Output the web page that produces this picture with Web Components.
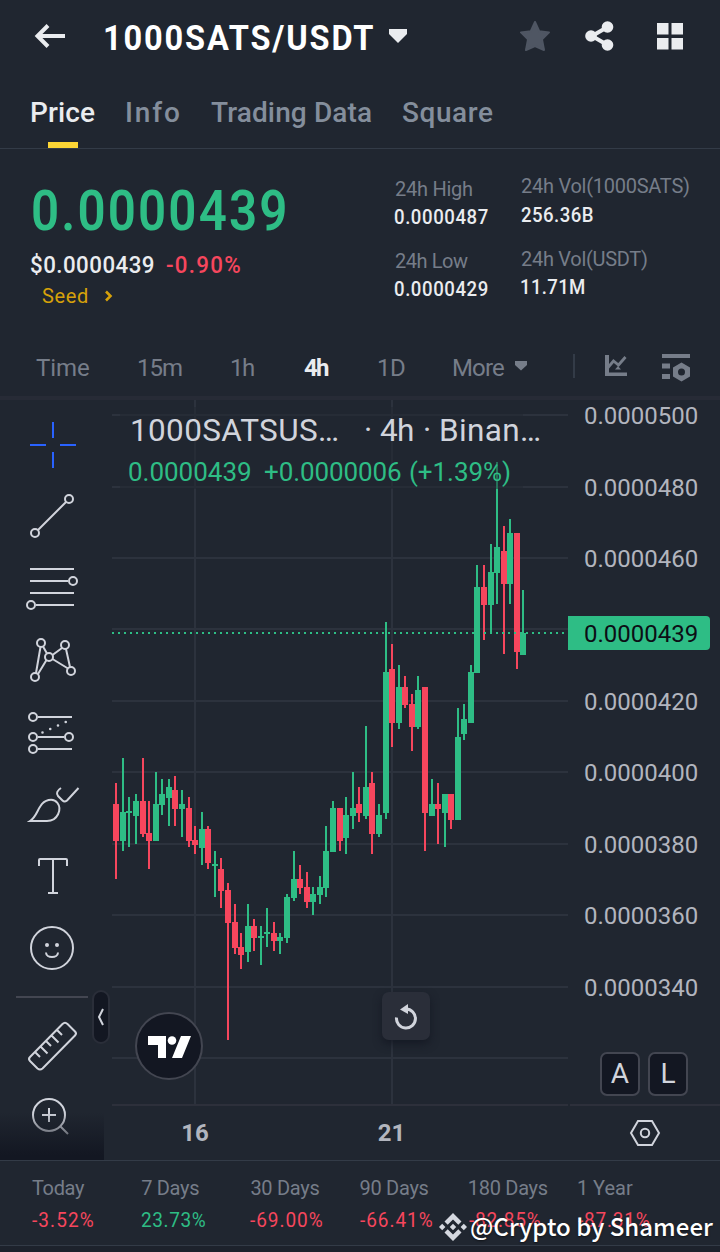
<!DOCTYPE html>
<html lang="en">
<head>
<meta charset="utf-8">
<title>1000SATS/USDT</title>
<style>
  body {
    margin: 0;
    background: #202630;
    color: #eaecef;
    font-family: Roboto, "Liberation Sans", sans-serif;
    --muted: #848e9c;
    --dim: #767d89;
    --up: #2ebd85;
    --down: #f6465d;
    --line: #333b47;
  }
</style>
</head>
<body>
<market-app></market-app>

<script>
/*
  A single line of text whose box is exactly its visible ink.
  The w attribute is the wanted width, the tracking is adjusted to fill it.
  --squeeze narrows the glyphs themselves.
*/
class FitText extends HTMLElement {
  constructor() {
    super();
    this.attachShadow({ mode: 'open' });
    this.shadowRoot.innerHTML = `
      <style>
        :host { display: block; flex: none; white-space: nowrap; }
        span { display: block; transform-origin: 0 50%; }
      </style>
      <span><slot></slot></span>
    `;
  }

  connectedCallback() {
    const text = this.textContent;
    const w = Number(this.getAttribute('w'));
    const cs = getComputedStyle(this);
    const squeeze = Number(cs.getPropertyValue('--squeeze')) || 1;
    const ctx = document.createElement('canvas').getContext('2d');
    ctx.font = `${cs.fontWeight} ${cs.fontSize} ${cs.fontFamily}`;
    const m = ctx.measureText(text);
    const ink = m.actualBoundingBoxRight + m.actualBoundingBoxLeft;
    const span = this.shadowRoot.querySelector('span');
    this.style.width = w + 'px';
    span.style.marginLeft = m.actualBoundingBoxLeft * squeeze + 'px';
    span.style.marginRight = '-20px';
    if (squeeze !== 1) {
      span.style.transform = `scaleX(${squeeze})`;
    }
    if (text.length > 1) {
      span.style.letterSpacing = (w / squeeze - ink) / (text.length - 1) + 'px';
    }
  }
}
customElements.define('fit-text', FitText);

class MarketHeader extends HTMLElement {
  constructor() {
    super();
    this.attachShadow({ mode: 'open' });
    this.shadowRoot.innerHTML = `
      <style>
        :host { display: flex; align-items: center; height: 72px; padding: 0 36px 0 34px; fill: #eaecef; }
        svg { flex: none; display: block; }
        .back { margin-right: 39px; }
        fit-text { font-size: 35px; line-height: 40px; font-weight: 700; color: #fff; margin-top: 6px; --squeeze: .93; }
        .caret { margin-left: 16px; }
        .actions { margin-left: auto; display: flex; align-items: center; }
        .share { margin: 0 41px 0 35px; }
      </style>
      <svg class="back" width="32" height="26" viewBox="0 0 32 26">
        <path d="M14 2.5 3.5 13 14 23.5M4 13h27" fill="none" stroke="#eaecef" stroke-width="4"/>
      </svg>
      <fit-text w="268">1000SATS/USDT</fit-text>
      <svg class="caret" width="18" height="14" viewBox="0 0 18 14"><path d="M0 0h18v5L9 14 0 5z"/></svg>
      <div class="actions">
        <svg width="30" height="30" viewBox="0 0 30 30">
          <path d="M15 1l4.2 9.2L29 11.4l-7 7 2 10.6-9-4-9 4 2-10.6-7-7 9.8-1.2z" fill="#4f5663" stroke="#4f5663" stroke-width="2" stroke-linejoin="round"/>
        </svg>
        <svg class="share" width="30" height="30" viewBox="0 0 30 30">
          <path d="M22.500 6 7 15l15.500 9" fill="none" stroke="#eaecef" stroke-width="4"/>
          <circle cx="6" cy="15" r="5.800"/><circle cx="22.500" cy="6" r="5.800"/><circle cx="22.500" cy="24" r="5.800"/>
        </svg>
        <svg width="28" height="28" viewBox="0 0 28 28"><path d="M1 1h11.500v11.500H1zM15.500 1H27v11.500H15.500zM1 16h11.500v11.500H1zM15.500 16H27v11.500H15.500z"/></svg>
      </div>
    `;
  }
}
customElements.define('market-header', MarketHeader);

class MarketTabs extends HTMLElement {
  constructor() {
    super();
    this.attachShadow({ mode: 'open' });
    this.shadowRoot.innerHTML = `
      <style>
        :host {
          display: flex; gap: 32px; box-sizing: border-box; height: 77px; padding: 25px 32px 0;
          border-bottom: 1px solid var(--line);
          font-size: 28px; line-height: 32px; font-weight: 500; color: var(--muted);
        }
        .active { position: relative; color: #eaecef; }
        .active::after { content: ""; position: absolute; left: 16px; top: 45px; width: 30px; height: 6px; background: #fcd535; }
      </style>
      <fit-text class="active" w="63">Price</fit-text>
      <fit-text w="52">Info</fit-text>
      <fit-text w="160">Trading Data</fit-text>
      <fit-text w="90">Square</fit-text>
    `;
  }
}
customElements.define('market-tabs', MarketTabs);

class MarketTicker extends HTMLElement {
  constructor() {
    super();
    this.attachShadow({ mode: 'open' });
    this.shadowRoot.innerHTML = `
      <style>
        :host { display: flex; box-sizing: border-box; height: 188px; }
        .main { width: 364px; padding: 32px 0 0 31px; box-sizing: content-box; }
        .price { font-size: 56px; line-height: 60px; font-weight: 600; color: var(--up); margin-left: 2px; --squeeze: .88; }
        .row { display: flex; gap: 12px; margin-top: 10px; font-size: 24px; line-height: 28px; font-weight: 500; --squeeze: .93; }
        .down { color: var(--down); }
        .seed { display: flex; align-items: center; gap: 17px; margin: 5px 0 0 11px; font-size: 20px; line-height: 24px; color: #d6a10a; }
        .stats { width: 126px; padding-top: 28px; font-size: 20px; line-height: 24px; }
        .stats.vol { padding-top: 25px; }
        .label { color: var(--dim); }
        .value { margin: 4px 0 20px; font-weight: 500; --squeeze: .93; }
        .vol .value { margin: 5px 0 20px; }
        .vol .value:last-child { margin-top: 4px; }
      </style>
      <div class="main">
        <fit-text class="price" w="252">0.0000439</fit-text>
        <div class="row">
          <fit-text w="123">$0.0000439</fit-text>
          <fit-text class="down" w="74">-0.90%</fit-text>
        </div>
        <div class="seed">
          <fit-text w="45">Seed</fit-text>
          <svg width="10" height="12" viewBox="0 0 10 12"><path d="M2 1.500 6.500 6 2 10.500" fill="none" stroke="#d6a10a" stroke-width="2.600"/></svg>
        </div>
      </div>
      <div class="stats">
        <fit-text class="label" w="77">24h High</fit-text>
        <fit-text class="value" w="93">0.0000487</fit-text>
        <fit-text class="label" w="73">24h Low</fit-text>
        <fit-text class="value" w="93">0.0000429</fit-text>
      </div>
      <div class="stats vol">
        <fit-text class="label" w="168">24h Vol(1000SATS)</fit-text>
        <fit-text class="value" w="72">256.36B</fit-text>
        <fit-text class="label" w="126">24h Vol(USDT)</fit-text>
        <fit-text class="value" w="64">11.71M</fit-text>
      </div>
    `;
  }
}
customElements.define('market-ticker', MarketTicker);

class IntervalBar extends HTMLElement {
  constructor() {
    super();
    this.attachShadow({ mode: 'open' });
    this.shadowRoot.innerHTML = `
      <style>
        :host {
          display: flex; box-sizing: border-box; height: 59px; padding: 17px 0 0 36px;
          font-size: 24px; line-height: 28px; color: var(--dim); fill: #767d89;
        }
        .items { display: flex; gap: 50px; }
        .active { color: #eaecef; font-weight: 700; }
        .more { display: flex; gap: 11px; margin-left: -2px; }
        .more svg { margin-top: 7px; }
        hr { width: 2px; height: 24px; margin: 0 30px 0 46px; border: 0; background: #333b47; }
        .layout { margin-left: 34px; }
      </style>
      <div class="items">
        <fit-text w="53">Time</fit-text>
        <fit-text w="43">15m</fit-text>
        <fit-text w="22">1h</fit-text>
        <fit-text class="active" w="25">4h</fit-text>
        <fit-text w="26">1D</fit-text>
        <div class="more">
          <fit-text w="51">More</fit-text>
          <svg width="12" height="10" viewBox="0 0 12 10"><path d="M0 0h12v4L6 9.500 0 4z"/></svg>
        </div>
      </div>
      <hr>
      <svg width="23" height="24" viewBox="0 0 23 24">
        <path d="M0 1h4v17.500h18V22H0z"/>
        <path d="M3 13.500 8.500 7l5 4L20.500 3" fill="none" stroke="#767d89" stroke-width="2.800"/>
        <path d="M10 15.500 13 12l3 3.500z"/>
      </svg>
      <svg class="layout" width="30" height="30" viewBox="0 0 30 30">
        <path d="M0-1h28v5H0zM0 9.500h8v5H0zM0 20h8v5H0z"/>
        <path fill-rule="evenodd" d="M19.500 8.500 28 13.500v9L19.500 27.500 11 22.500v-9zM19.500 14.500a3.500 3.500 0 1 0 0 7 3.500 3.500 0 0 0 0-7z"/>
      </svg>
    `;
  }
}
customElements.define('interval-bar', IntervalBar);

// every tool is drawn in a 72 x 72 tile
const TOOLS = {
  cross: '<path stroke="#2962ff" d="M37 13v16M37 43v16M14 36h16M44 36h16"/>',
  trend: '<circle cx="19" cy="52" r="4"/><circle cx="53" cy="18" r="4"/><path d="M22 49 50 21"/>',
  fib: '<path d="M14 16h44M14 28h38M14 40h44M20 52h38"/><circle cx="57" cy="28" r="4"/><circle cx="15" cy="52" r="4"/>',
  pattern: '<circle cx="25" cy="18" r="4"/><circle cx="49" cy="20" r="4"/><circle cx="33" cy="32" r="4"/><circle cx="19" cy="52" r="4"/><circle cx="55" cy="46" r="4"/><path d="M24.500 22 20 48M27 21.500l4 7M30.500 35 22 49M36.500 30 46 23M50 24l4 18M36.500 34 52 43.500"/>',
  forecast: '<circle cx="17" cy="20" r="4"/><circle cx="17" cy="40" r="4"/><circle cx="17" cy="52" r="4"/><circle cx="53" cy="40" r="4"/><path d="M22 20h34M22 40h26M22 52h34"/><path d="M26.500 35.500 53 23.500" stroke-width="2.600" stroke-linecap="round" stroke-dasharray="0 8.500"/>',
  brush: '<path d="M14 52C20 48 21 42 24.500 37 28 31 37 28 41.500 34 46 40 42 52 31 52zM45 19c-4 2.500-5 5.500-3 8l4.500 4.500c1.500 1.500 3.500 1 4.500 0L62.500 19"/>',
  text: '<path d="M23 25v-6q0-1 1-1h26q1 0 1 1v6M37 18v34M32 52h10"/>',
  smile: '<circle cx="36" cy="35" r="21"/><circle cx="31" cy="32" r="2" fill="#d1d4dc" stroke="none"/><circle cx="41" cy="32" r="2" fill="#d1d4dc" stroke="none"/><path d="M30 39.500c0 6 12 6 12 0"/>',
  ruler: '<path transform="translate(.5 .5)" d="M46 13.500q2.500-2.500 5 0l7.500 7.500q2 2 0 4L26 58q-2.500 2-5 0l-7.500-7.500q-2-2 0-4zM19 42l4.500 4.500M24.500 36.500 31 43M30 31l4.500 4.500M35.500 25.500 42 32M41 20l4.500 4.500"/>',
  zoom: '<circle cx="33" cy="33" r="16"/><path d="M26 33h14M33 26v14M44.500 44.500 52 52"/>'
};

class DrawingTools extends HTMLElement {
  constructor() {
    super();
    this.attachShadow({ mode: 'open' });
    const tile = name => `<svg width="72" height="72" viewBox="0 0 72 72">${TOOLS[name]}</svg>`;
    this.shadowRoot.innerHTML = `
      <style>
        :host { display: block; position: relative; width: 112px; height: 764px; box-sizing: border-box; padding: 13px 0 0 16px; overflow: hidden; }
        svg { display: block; fill: none; stroke: #d1d4dc; stroke-width: 2; }
        hr { width: 72px; height: 2px; margin: 11px 0 12px; border: 0; background: #434651; }
        .fade { position: absolute; left: 0; bottom: 0; width: 104px; height: 48px; background: linear-gradient(#13172200, #131722 90%); }
        .handle {
          position: absolute; left: 92px; top: 594px; width: 14px; height: 50px; border: 2px solid #2a2e39; border-radius: 9px;
          background: #131722;
        }
      </style>
      ${['cross', 'trend', 'fib', 'pattern', 'forecast', 'brush', 'text', 'smile'].map(tile).join('')}
      <hr>
      ${tile('ruler')}${tile('zoom')}
      <div class="fade"></div>
      <div class="handle"><svg width="14" height="50" viewBox="0 0 14 50"><path d="M9 17 5 25l4 8"/></svg></div>
    `;
  }
}
customElements.define('drawing-tools', DrawingTools);

// x, wick top, wick bottom, body top, body bottom, 1 = up
const CANDLES = [
  [116, 783, 879, 804, 841, 0], [123, 758, 851, 812, 841, 1], [129, 797, 847, 811, 813, 1],
  [136, 794, 844, 801, 816, 1], [143, 758, 837, 801, 834, 0], [149, 801, 869, 833, 841, 0],
  [156, 772, 841, 804, 841, 1], [162, 779, 815, 794, 805, 1], [169, 779, 826, 787, 798, 1],
  [175, 776, 826, 790, 809, 0], [182, 790, 837, 804, 809, 1], [189, 797, 847, 808, 841, 0],
  [195, 826, 854, 840, 845, 0], [202, 812, 865, 829, 848, 1], [208, 826, 869, 829, 863, 0],
  [215, 851, 897, 864, 866, 1], [221, 858, 908, 869, 891, 0], [228, 883, 1040, 890, 923, 0],
  [235, 904, 954, 922, 948, 0], [241, 933, 969, 947, 955, 0], [248, 904, 962, 926, 952, 1],
  [254, 919, 951, 926, 938, 0], [261, 926, 965, 936, 938, 1], [267, 908, 947, 932, 934, 1],
  [274, 922, 951, 933, 941, 0], [280, 933, 954, 937, 941, 1], [287, 894, 943, 897, 938, 1],
  [294, 851, 901, 879, 898, 1], [300, 865, 894, 879, 888, 0], [307, 872, 908, 887, 902, 0],
  [313, 887, 915, 894, 902, 1], [320, 876, 904, 887, 895, 1], [326, 826, 897, 851, 888, 1],
  [333, 801, 852, 808, 852, 1], [340, 808, 851, 808, 841, 0], [346, 797, 854, 815, 838, 1],
  [353, 772, 829, 808, 816, 1], [359, 787, 822, 804, 813, 0], [366, 726, 819, 787, 816, 1],
  [372, 772, 854, 783, 834, 0], [379, 804, 837, 815, 834, 1], [386, 622, 819, 672, 813, 1],
  [392, 644, 747, 669, 723, 0], [399, 665, 729, 687, 723, 1], [405, 676, 708, 687, 705, 0],
  [412, 694, 751, 704, 727, 0], [418, 676, 729, 690, 727, 1], [425, 687, 851, 687, 813, 0],
  [432, 779, 816, 804, 816, 1], [438, 783, 844, 804, 809, 0], [445, 794, 847, 794, 813, 1],
  [451, 794, 829, 794, 820, 0], [458, 708, 820, 737, 820, 1], [464, 704, 740, 719, 734, 1],
  [471, 665, 723, 672, 723, 1], [477, 565, 673, 587, 673, 1], [484, 565, 640, 587, 605, 0],
  [491, 544, 634, 572, 605, 1], [497, 462, 604, 547, 573, 1], [504, 526, 654, 551, 584, 0],
  [510, 519, 604, 533, 584, 1], [517, 533, 669, 533, 652, 0], [523, 590, 655, 633, 655, 1]
];

class PriceChart extends HTMLElement {
  constructor() {
    super();
    this.attachShadow({ mode: 'open' });

    const ys = [415, 487, 558, 629, 701, 772, 844, 915, 987, 1058];
    const grid = ys.map(y => `<path d="M112 ${y}h456"/>`).join('');
    // the 0.0000440 label is covered by the last price tag, the lowest line has none
    const labels = ys.map((y, i) => i === 3 || i === 9 ? '' :
      `<text x="584" y="${y + 9}">0.0000${500 - i * 20}</text>`).join('');
    const candles = CANDLES.map(([x, wt, wb, bt, bb, up]) =>
      `<path fill="${up ? '#2ebd85' : '#f6465d'}" d="M${x - 1} ${wt}h2V${wb}h-2zM${x - 3} ${bt}h6V${bb}h-6z"/>`).join('');

    this.shadowRoot.innerHTML = `
      <style>
        :host { display: block; position: relative; width: 608px; height: 764px; }
        .plot { display: block; shape-rendering: crispEdges; font-size: 24px; fill: #b2b5be; }
        .legend {
          position: absolute; left: 8px; top: 11px; width: 403px; height: 82px; box-sizing: border-box; padding: 5px 0 0 9px;
          background: #20263080; font-size: 31.500px; line-height: 38px; color: #d1d4dc;
        }
        .legend div { display: flex; }
        .legend .quote { margin-top: 7px; font-size: 26px; line-height: 30px; color: var(--up); }
        .logo { position: absolute; left: 22px; top: 615px; }
        .reset {
          position: absolute; left: 270px; top: 596px; width: 48px; height: 48px; border-radius: 7px;
          background: #2a2e39; box-shadow: 0 4px 8px #131722cc;
        }
        .modes { position: absolute; left: 488px; top: 656px; display: flex; gap: 8px; }
        .modes div {
          box-sizing: border-box; width: 40px; height: 44px; border: 2px solid #434651; border-radius: 7px; background: #131722;
          font-size: 28px; line-height: 39px; text-align: center; color: #d1d4dc;
        }
        .gear { position: absolute; left: 517px; top: 722px; }
      </style>
      <svg class="plot" width="608" height="764" viewBox="112 396 608 764">
        <g stroke="#2c323d" stroke-width="2">${grid}<path d="M195 400V1104M392 400V1104"/></g>
        <path stroke="#2d303b" stroke-width="2" d="M112 1105h456M570 1105h150"/>
        ${candles}
        <path stroke="#2ebd85" stroke-width="2" stroke-dasharray="2 4" d="M112 633h456"/>
        ${labels}
        <path fill="#2ebd85" shape-rendering="auto" d="M568 616h138q4 0 4 4v26q0 4-4 4H568z"/>
        <text x="584" y="642" fill="#0c0e15">0.0000439</text>
        <g font-weight="700" text-anchor="middle"><text x="195" y="1141">16</text><text x="391.500" y="1141">21</text></g>
      </svg>
      <div class="legend">
        <div>
          <fit-text w="205" style="margin-left: 3px">1000SATSUS…</fit-text>
          <fit-text w="4" style="margin-left: 29px">·</fit-text>
          <fit-text w="33" style="margin-left: 10px">4h</fit-text>
          <fit-text w="4" style="margin-left: 12px">·</fit-text>
          <fit-text w="98" style="margin-left: 12px">Binan…</fit-text>
        </div>
        <div class="quote">
          <fit-text w="121">0.0000439</fit-text>
          <fit-text w="137" style="margin-left: 14px">+0.0000006</fit-text>
          <fit-text w="100" style="margin-left: 9px">(+1.39%)</fit-text>
        </div>
      </div>
      <svg class="logo" width="70" height="70" viewBox="0 0 70 70">
        <circle cx="35" cy="35" r="33" fill="#131722" stroke="#434651" stroke-width="2"/>
        <path fill="#fff" d="M14 25h18v22h-8V34H14zM47 25h10L48 47H38z"/>
        <circle cx="38" cy="29.500" r="4.300" fill="#fff"/>
      </svg>
      <div class="reset">
        <svg width="48" height="48" viewBox="0 0 48 48">
          <path d="M14.500 25.500A9.500 9.500 0 1 0 24 17" fill="none" stroke="#d1d4dc" stroke-width="3"/>
          <path d="M18 17.500 26 12v10z" fill="#d1d4dc"/>
        </svg>
      </div>
      <div class="modes"><div>A</div><div>L</div></div>
      <svg class="gear" width="32" height="30" viewBox="0 0 32 30" fill="none" stroke="#d1d4dc" stroke-width="2">
        <path d="M9 3h14l7 12-7 12H9L2 15z"/><circle cx="16" cy="15" r="4.200"/>
      </svg>
    `;
  }
}
customElements.define('price-chart', PriceChart);

class PeriodChanges extends HTMLElement {
  constructor() {
    super();
    this.attachShadow({ mode: 'open' });
    const rows = [
      ['Today', 53, '-3.52%', 61], ['7 Days', 58, '23.73%', 64], ['30 Days', 69, '-69.00%', 72],
      ['90 Days', 69, '-66.41%', 72], ['180 Days', 79, '-82.85%', 71], ['1 Year', 55, '-87.31%', 71]
    ];
    this.shadowRoot.innerHTML = `
      <style>
        :host {
          display: flex; box-sizing: border-box; height: 86px; padding: 15px 0 0 32px;
          border: solid var(--line); border-width: 1px 0; font-size: 20px; line-height: 24px;
        }
        div { flex: none; width: 109.200px; }
        .label { color: var(--dim); margin-bottom: 8px; }
        .up, .down { --squeeze: .95; }
        .up { color: var(--up); }
        .down { color: var(--down); }
      </style>
      ${rows.map(([label, lw, value, vw]) => `
        <div>
          <fit-text class="label" w="${lw}">${label}</fit-text>
          <fit-text class="${value[0] === '-' ? 'down' : 'up'}" w="${vw}">${value}</fit-text>
        </div>`).join('')}
    `;
  }
}
customElements.define('period-changes', PeriodChanges);

class AuthorMark extends HTMLElement {
  constructor() {
    super();
    this.attachShadow({ mode: 'open' });
    this.shadowRoot.innerHTML = `
      <style>
        :host {
          display: flex; align-items: center; gap: 4px; color: #fff;
          font: 500 24px/32px "Noto Sans CJK SC", "Noto Sans", sans-serif; text-shadow: 0 1px 2px #0008;
        }
        fit-text { margin-top: -2px; }
      </style>
      <svg width="28" height="28" viewBox="0 0 28 28" fill="#d5d8e0">
        <path d="M14 0l8.500 8.500-3.200 3.200L14 6.400l-5.300 5.300-3.200-3.200zM14 28l8.500-8.500-3.200-3.200-5.300 5.300-5.300-5.300-3.200 3.200zM14 10.800l3.200 3.200-3.200 3.200-3.200-3.200zM3.200 10.800 6.400 14l-3.200 3.200L0 14zM24.800 10.800 28 14l-3.200 3.200-3.200-3.200z"/>
      </svg>
      <fit-text w="242">@Crypto by Shameer</fit-text>
    `;
  }
}
customElements.define('author-mark', AuthorMark);

class MarketApp extends HTMLElement {
  constructor() {
    super();
    this.attachShadow({ mode: 'open' });
    this.shadowRoot.innerHTML = `
      <style>
        :host { display: block; position: relative; width: 720px; height: 1252px; overflow: hidden; }
        .chart { display: flex; position: relative; }
        .chart::before { content: ""; position: absolute; left: 0; top: 0; width: 100%; height: 4px; background: #272b36; }
        .foot { height: 6px; background: #1d222c; }
        author-mark { position: absolute; left: 439px; top: 1212px; }
      </style>
      <market-header></market-header>
      <market-tabs></market-tabs>
      <market-ticker></market-ticker>
      <interval-bar></interval-bar>
      <div class="chart">
        <drawing-tools></drawing-tools>
        <price-chart></price-chart>
      </div>
      <period-changes></period-changes>
      <div class="foot"></div>
      <author-mark></author-mark>
    `;
  }
}
customElements.define('market-app', MarketApp);
</script>
</body>
</html>
